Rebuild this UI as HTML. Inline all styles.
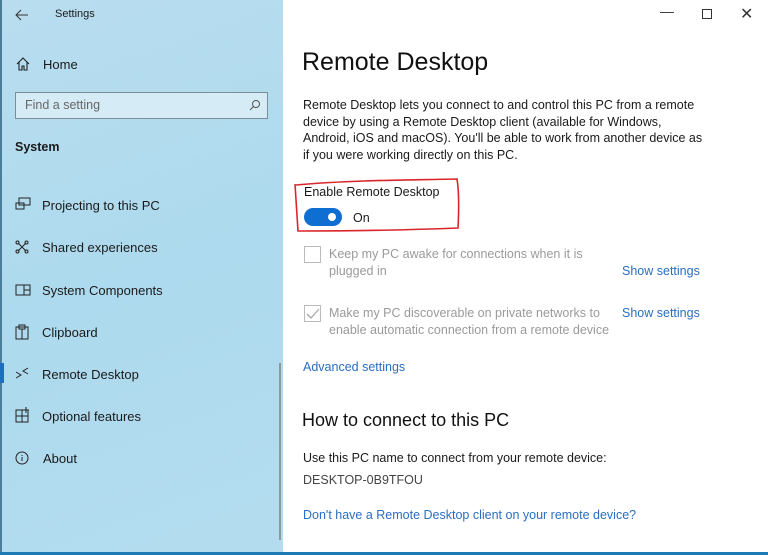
<!DOCTYPE html>
<html><head><style>
*{margin:0;padding:0;box-sizing:border-box}
body{width:768px;height:555px;overflow:hidden;font-family:"Liberation Sans",sans-serif;background:#fff;position:relative;color:#1a1a1a}
.sb{position:absolute;left:0;top:0;width:283px;height:552px;background:linear-gradient(160deg,#b9ddef 0%,#addaee 50%,#b4dcef 100%)}
.t{position:absolute;white-space:nowrap}
.nav{font-size:13px;color:#1a1a1a}
.ic{position:absolute}
.r{font-size:12.5px;line-height:16.5px}
.g{color:#9a9a9a}
.l{color:#2a6ec2}
</style></head><body>
<div class="sb"></div>
<div style="position:absolute;left:0;top:0;width:2px;height:552px;background:#4c7d98"></div>
<div style="position:absolute;left:0;top:552px;width:768px;height:3px;background:#1e7ab5"></div>
<svg class="ic" style="left:14px;top:8px" width="16" height="14"><path d="M14 7H2M7 2L2 7l5 5" stroke="#333" fill="none" stroke-width="1"/></svg>
<div class="t" style="left:55px;top:8px;font-size:11px">Settings</div>
<svg class="ic" style="left:16px;top:57px" width="14" height="14"><path d="M1 7L7 1l6 6M3 5v8h3V9h2v4h3V5" stroke="#222" fill="none" stroke-width="1.1"/></svg>
<div class="t nav" style="left:43px;top:57px">Home</div>
<div style="position:absolute;left:15px;top:92px;width:253px;height:27px;border:1.5px solid #7a8e99;background:#d5ebf5"></div>
<div class="t" style="left:25px;top:98px;font-size:12.5px;color:#666">Find a setting</div>
<svg class="ic" style="left:249px;top:99px" width="12" height="12"><circle cx="7" cy="5" r="3.5" stroke="#555" fill="none"/><path d="M4.5 7.5L1 11" stroke="#555"/></svg>
<div class="t" style="left:15px;top:140px;font-size:12.5px;font-weight:bold">System</div>
<svg class="ic" style="left:15px;top:197px" width="16" height="14" stroke="#222" fill="none"><rect x="4" y="1" width="11" height="7"/><rect x="1" y="6" width="8" height="6"/></svg>
<div class="t nav" style="left:42px;top:198px">Projecting to this PC</div>
<svg class="ic" style="left:15px;top:240px" width="14" height="14" stroke="#222" fill="none"><path d="M3 3l8 8M11 3l-8 8"/><circle cx="2.5" cy="2.5" r="1.5"/><circle cx="11.5" cy="2.5" r="1.5"/><circle cx="2.5" cy="11.5" r="1.5"/><circle cx="11.5" cy="11.5" r="1.5"/></svg>
<div class="t nav" style="left:42px;top:240px">Shared experiences</div>
<svg class="ic" style="left:15px;top:284px" width="16" height="12" stroke="#222" fill="none"><rect x="1" y="1" width="14" height="10"/><path d="M9 1v10M9 6h6"/></svg>
<div class="t nav" style="left:42px;top:283px">System Components</div>
<svg class="ic" style="left:15px;top:324px" width="14" height="16" stroke="#222" fill="none"><rect x="1" y="3" width="12" height="12"/><rect x="4" y="1" width="6" height="4"/><path d="M7 5v10"/></svg>
<div class="t nav" style="left:42px;top:325px">Clipboard</div>
<div style="position:absolute;left:0;top:363px;width:4px;height:20px;background:#1a6fc0"></div>
<svg class="ic" style="left:15px;top:367px" width="14" height="12" stroke="#222" fill="none"><path d="M1 5l5 3-5 3M13 1L8 4l5 3"/></svg>
<div class="t nav" style="left:42px;top:367px">Remote Desktop</div>
<svg class="ic" style="left:15px;top:407px" width="15" height="16" stroke="#222" fill="none"><rect x="1" y="3" width="12" height="12"/><path d="M1 9h12M7 3v12M11 0v6M8 3h6"/></svg>
<div class="t nav" style="left:42px;top:409px">Optional features</div>
<svg class="ic" style="left:15px;top:451px" width="14" height="14" stroke="#222" fill="none"><circle cx="7" cy="7" r="6"/><path d="M7 6v4M7 4v1"/></svg>
<div class="t nav" style="left:43px;top:451px">About</div>
<div style="position:absolute;left:279px;top:363px;width:2px;height:177px;background:#8a9aa2"></div>
<div class="t" style="left:660px;top:3px;font-size:14px;color:#333">&#8212;</div>
<div style="position:absolute;left:702px;top:9px;width:10px;height:10px;border:1px solid #333"></div>
<div class="t" style="left:740px;top:4px;font-size:16px;color:#333">&#10005;</div>
<div class="t" style="left:302px;top:48px;font-size:25px;color:#111">Remote Desktop</div>
<div class="t r" style="left:303px;top:97px">Remote Desktop lets you connect to and control this PC from a remote<br>device by using a Remote Desktop client (available for Windows,<br>Android, iOS and macOS). You'll be able to work from another device as<br>if you were working directly on this PC.</div>
<svg class="ic" style="left:292px;top:174px" width="170" height="60"><path d="M4 11C60 6 120 6 165 5c2 12 2 30 1 49-50 2-110 3-160 3C5 40 4 25 3 10" stroke="#d9262c" stroke-width="1.6" fill="none"/></svg>
<div class="t r" style="left:304px;top:184px">Enable Remote Desktop</div>
<div style="position:absolute;left:304px;top:208px;width:38px;height:18px;border-radius:9px;background:#0f6ed1"></div>
<div style="position:absolute;left:328px;top:213px;width:8px;height:8px;border-radius:50%;background:#fff"></div>
<div class="t r" style="left:353px;top:210px">On</div>
<div style="position:absolute;left:304px;top:246px;width:17px;height:17px;border:1.5px solid #bbb"></div>
<div class="t r g" style="left:329px;top:246px">Keep my PC awake for connections when it is<br>plugged in</div>
<div class="t r l" style="left:622px;top:263px">Show settings</div>
<div style="position:absolute;left:304px;top:305px;width:17px;height:17px;border:1.5px solid #bbb"></div>
<svg class="ic" style="left:306px;top:307px" width="14" height="14"><path d="M1 7l4 4 8-9" stroke="#aaa" fill="none" stroke-width="1.3"/></svg>
<div class="t r g" style="left:329px;top:305px">Make my PC discoverable on private networks to<br>enable automatic connection from a remote device</div>
<div class="t r l" style="left:622px;top:305px">Show settings</div>
<div class="t r l" style="left:303px;top:359px">Advanced settings</div>
<div class="t" style="left:302px;top:410px;font-size:18px;color:#111">How to connect to this PC</div>
<div class="t r" style="left:303px;top:450px">Use this PC name to connect from your remote device:</div>
<div class="t r" style="left:303px;top:472px;color:#444">DESKTOP-0B9TFOU</div>
<div class="t r l" style="left:303px;top:507px">Don't have a Remote Desktop client on your remote device?</div>
</body></html>
